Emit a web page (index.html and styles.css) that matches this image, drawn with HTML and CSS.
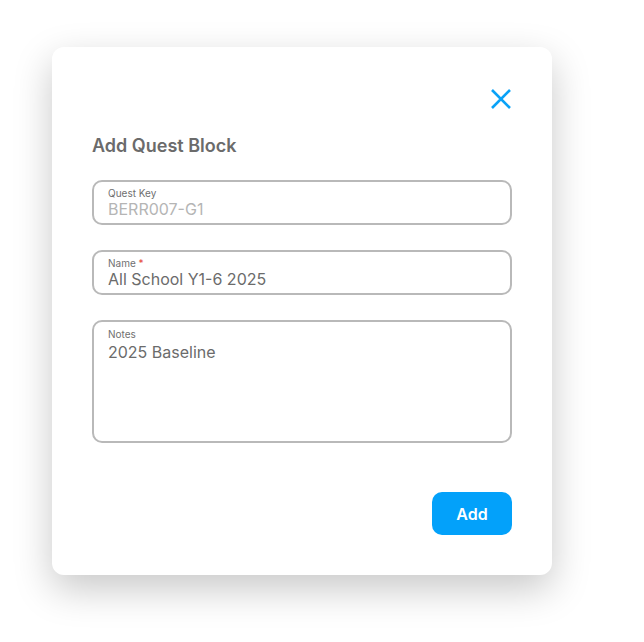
FILE: index.html
```html
<!DOCTYPE html>
<html lang="en">
<head>
    <meta charset="UTF-8">
    <meta name="viewport" content="width=device-width, initial-scale=1.0">
    <title>Add Quest Block</title>
    <link rel="stylesheet" href="styles.css">
</head>
<body>
    <div class="dialog">
        <div class="dialog-top">
            <button class="close" aria-label="Close">
                <svg width="24" height="24" viewBox="0 0 24 24">
                    <path d="M3 3 L21 21 M21 3 L3 21" stroke="#0aa2f7" stroke-width="2.6" fill="none"/>
                </svg>
            </button>
        </div>
        <h2>Add Quest Block</h2>
        <form class="quest-form">
            <label class="field">
                <span class="field-label">Quest Key</span>
                <input type="text" value="BERR007-G1" disabled>
            </label>
            <label class="field">
                <span class="field-label">Name <span class="req">*</span></span>
                <input type="text" value="All School Y1-6 2025">
            </label>
            <label class="field notes">
                <span class="field-label">Notes</span>
                <textarea>2025 Baseline</textarea>
            </label>
            <div class="actions">
                <button type="submit" class="btn">Add</button>
            </div>
        </form>
    </div>
</body>
</html>
```

FILE: styles.css
```css
html, body {
    min-height: 100%;
}

body {
    font-family: 'Inter', 'Liberation Sans', sans-serif;
    margin: 0;
    padding: 47px 0 0 52px;
    box-sizing: border-box;
    min-height: 100vh;
    background: #ffffff;
    color: #6b6b6b;
}

.dialog {
    width: 500px;
    box-sizing: border-box;
    padding: 40px;
    background: #ffffff;
    border-radius: 12px;
    box-shadow: 0 14px 38px rgba(0, 0, 0, 0.22);
}

.dialog-top {
    display: flex;
    justify-content: flex-end;
}

.close {
    width: 24px;
    height: 24px;
    padding: 0;
    border: none;
    background: none;
    cursor: pointer;
    margin-right: -1px;
}

.close svg {
    display: block;
}

h2 {
    margin: 23px 0 22px;
    font-size: 18px;
    line-height: 24px;
    font-weight: 600;
    color: #6b6b6b;
}

.quest-form {
    display: flex;
    flex-direction: column;
    gap: 25px;
}

.field {
    display: flex;
    flex-direction: column;
    height: 45px;
    box-sizing: border-box;
    padding: 5px 14px 4px;
    border: 2px solid #b9b9b9;
    border-radius: 10px;
}

.field-label {
    font-size: 10px;
    line-height: 12px;
    color: #707070;
}

.req {
    color: #e5463c;
}

.field input,
.field textarea {
    font-family: inherit;
    font-size: 16px;
    line-height: 20px;
    color: #6b6b6b;
    border: none;
    outline: none;
    padding: 0;
    margin: 0;
    background: transparent;
}

.field input:disabled {
    color: #b5b5b5;
}

.field.notes {
    height: 123px;
    padding-top: 6px;
}

.field textarea {
    flex: 1;
    margin-top: 2px;
    resize: none;
}

.actions {
    display: flex;
    justify-content: flex-end;
    margin-top: 24px;
}

.btn {
    width: 80px;
    height: 43px;
    border: none;
    border-radius: 10px;
    background: #03a1fa;
    color: #ffffff;
    font-family: inherit;
    font-size: 16px;
    font-weight: 600;
    cursor: pointer;
}
```
